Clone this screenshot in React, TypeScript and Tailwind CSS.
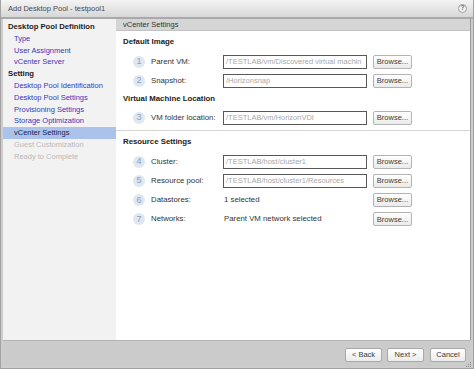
const nav = [
  { label: "Desktop Pool Definition", kind: "head" },
  { label: "Type", kind: "link" },
  { label: "User Assignment", kind: "link" },
  { label: "vCenter Server", kind: "link" },
  { label: "Setting", kind: "head" },
  { label: "Desktop Pool Identification", kind: "link" },
  { label: "Desktop Pool Settings", kind: "link" },
  { label: "Provisioning Settings", kind: "link" },
  { label: "Storage Optimization", kind: "link" },
  { label: "vCenter Settings", kind: "active" },
  { label: "Guest Customization", kind: "off" },
  { label: "Ready to Complete", kind: "off" },
];

function NavItem({ label, kind }: { label: string; kind: string }) {
  if (kind === "head") {
    return <div className="h-[11.8px] leading-[11.8px] pl-[5px] font-bold text-[7.7px] text-[#1c1c1c]">{label}</div>;
  }
  if (kind === "active") {
    return <div className="h-[11.8px] leading-[11.8px] pl-[11px] bg-[#abc3ea] text-[#15244f]">{label}</div>;
  }
  return (
    <div className={"h-[11.8px] leading-[11.8px] pl-[11px] " + (kind === "off" ? "text-[#b9b9b9]" : "text-[#3a36bf]")}>
      {label}
    </div>
  );
}

function Browse() {
  return (
    <div className="ml-[6px] w-[39px] h-[14px] flex items-center justify-center rounded-[2px] border border-[#b3b3b3] bg-linear-to-b from-[#ffffff] to-[#ebebeb] text-[7.5px] text-[#3a3a3a]">
      Browse...
    </div>
  );
}

function Row({ n, label, value, text }: { n: number; label: string; value?: string; text?: string }) {
  return (
    <div className="h-[19.2px] flex items-center text-[7.8px]">
      <div className="ml-[17px] w-[12px] h-[12px] rounded-full bg-[#dfe7f1] flex items-center justify-center text-[9px] leading-none text-[#86a2c6]">
        {n}
      </div>
      <div className="ml-[6px] w-[72px] text-[#333]">{label}</div>
      {value !== undefined ? (
        <div className="w-[144px] h-[14px] border border-[#585858] bg-white pl-[2px] leading-[12px] text-[7.5px] text-[#a8a8a8] overflow-hidden whitespace-nowrap">
          {value}
        </div>
      ) : (
        <div className="w-[144px] pl-[1px] text-[#333] whitespace-nowrap">{text}</div>
      )}
      <Browse />
    </div>
  );
}

function Heading({ children, className }: { children: string; className: string }) {
  return <div className={"h-[12px] leading-[12px] pl-[7px] font-bold text-[7.8px] text-[#222] " + className}>{children}</div>;
}

function FooterButton({ label, w }: { label: string; w: string }) {
  return (
    <div className={w + " h-[14px] flex items-center justify-center rounded-[2px] border border-[#a9a9a9] bg-linear-to-b from-[#ffffff] to-[#ececec] text-[#3a3a3a]"}>
      {label}
    </div>
  );
}

export default function App() {
  return (
    <div className="w-[474px] h-[369px] flex flex-col bg-[#cdcdcd] border-x border-b border-[#a2a2a2] font-['Liberation_Sans',Arial,sans-serif] text-[7.5px] overflow-hidden">
      {/* title bar */}
      <div className="h-[17px] flex items-center justify-between pl-[7px] pr-[6px] bg-linear-to-b from-[#f4f4f4] to-[#d7d7d7] text-[#4a4a4a]">
        <span>Add Desktop Pool - testpool1</span>
        <div className="w-[9px] h-[9px] rounded-full border border-[#9d9d9d] bg-[#f2f2f2] flex items-center justify-center text-[6.5px] font-bold leading-none text-[#6a6a6a]">
          ?
        </div>
      </div>
      <div className="h-[2px] bg-[#a9a9a9]" />

      <div className="flex-1 flex mx-[2px] min-h-0">
        <div className="w-[113px] bg-[#f2f2f2] pt-[2px]">
          {nav.map((item) => (
            <NavItem key={item.label} label={item.label} kind={item.kind} />
          ))}
        </div>
        <div className="flex-1 bg-white flex flex-col border-r border-[#9a9a9a]">
          <div className="h-[12px] leading-[11px] pl-[7px] bg-[#d5d5d5] border-b border-[#c2c2c2] text-[#333]">vCenter Settings</div>
          <Heading className="mt-[5px]">Default Image</Heading>
          <div className="mt-[4px]">
            <Row n={1} label="Parent VM:" value="/TESTLAB/vm/Discovered virtual machin" />
            <Row n={2} label="Snapshot:" value="/Horizonsnap" />
          </div>
          <Heading className="mt-[2.5px]">Virtual Machine Location</Heading>
          <div className="mt-[3.5px]">
            <Row n={3} label="VM folder location:" value="/TESTLAB/vm/HorizonVDI" />
          </div>
          <div className="mt-[2px] h-px bg-[#d6d6d6]" />
          <Heading className="mt-[5px]">Resource Settings</Heading>
          <div className="mt-[4.5px]">
            <Row n={4} label="Cluster:" value="/TESTLAB/host/cluster1" />
            <Row n={5} label="Resource pool:" value="/TESTLAB/host/cluster1/Resources" />
            <Row n={6} label="Datastores:" text="1 selected" />
            <Row n={7} label="Networks:" text="Parent VM network selected" />
          </div>
        </div>
      </div>

      {/* footer */}
      <div className="relative h-[26px] mx-[2px] bg-[#cbcbcb] border-t border-[#b4b4b4] flex items-start justify-end pt-[7px] pr-[5px]">
        <FooterButton label="< Back" w="w-[37px]" />
        <div className="w-[5px]" />
        <FooterButton label="Next >" w="w-[37px]" />
        <div className="w-[6px]" />
        <FooterButton label="Cancel" w="w-[36px]" />
        <svg className="absolute right-[-1px] bottom-[-2px]" width="6" height="6" viewBox="0 0 6 6">
          <rect x="4" y="0" width="1" height="1" fill="#8a8a8a" />
          <rect x="2" y="2" width="1" height="1" fill="#8a8a8a" />
          <rect x="4" y="2" width="1" height="1" fill="#8a8a8a" />
          <rect x="0" y="4" width="1" height="1" fill="#8a8a8a" />
          <rect x="2" y="4" width="1" height="1" fill="#8a8a8a" />
          <rect x="4" y="4" width="1" height="1" fill="#8a8a8a" />
        </svg>
      </div>
      <div className="h-[2px]" />
    </div>
  );
}
